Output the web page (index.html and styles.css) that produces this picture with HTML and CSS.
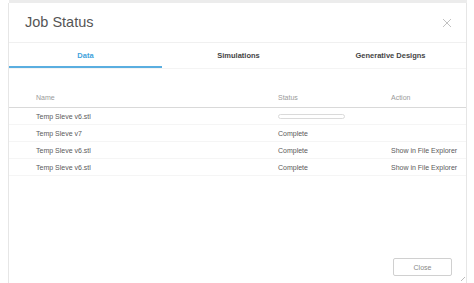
FILE: index.html
```html
<!DOCTYPE html>
<html lang="en">
  <head>
    <meta charset="UTF-8" />
    <title>Job Status</title>
    <link rel="stylesheet" href="styles.css">
  </head>
  <body>
    <div class="topband"></div>
    <main class="modal" role="dialog" aria-label="Job Status">
      <header class="modal-header">
        <h1>Job Status</h1>
        <button class="close-x" aria-label="Close">
          <svg width="10" height="10" viewBox="0 0 10 10">
            <path d="M1 1 L9 9 M9 1 L1 9" stroke="#c2c2c2" stroke-width="1" fill="none" />
          </svg>
        </button>
      </header>

      <nav class="tabs">
        <div class="tab active">Data</div>
        <div class="tab">Simulations</div>
        <div class="tab">Generative Designs</div>
      </nav>

      <section class="jobs">
        <div class="row head">
          <div>Name</div>
          <div>Status</div>
          <div>Action</div>
        </div>
        <div class="row">
          <div>Temp Sleve v6.stl</div>
          <div><div class="progress"></div></div>
          <div></div>
        </div>
        <div class="row">
          <div>Temp Sleve v7</div>
          <div>Complete</div>
          <div></div>
        </div>
        <div class="row">
          <div>Temp Sleve v6.stl</div>
          <div>Complete</div>
          <div>Show in File Explorer</div>
        </div>
        <div class="row">
          <div>Temp Sleve v6.stl</div>
          <div>Complete</div>
          <div>Show in File Explorer</div>
        </div>
      </section>

      <footer class="modal-footer">
        <button class="btn-close">Close</button>
      </footer>
      <div class="resize"></div>
    </main>
  </body>
</html>
```

FILE: styles.css
```css
* {
  margin: 0;
  padding: 0;
  box-sizing: border-box;
}

body {
  font-family: "Liberation Sans", Arial, sans-serif;
  background: #fff;
  color: #555;
  width: 474px;
  height: 283px;
  overflow: hidden;
}

.topband {
  height: 3px;
  margin: 0 7px 0 9px;
  background: #ececec;
}

.modal {
  position: relative;
  margin: 0 7px 0 8px;
  height: 280px;
  background: #fff;
  border-left: 1px solid #e6e6e6;
  border-right: 1px solid #e6e6e6;
  display: flex;
  flex-direction: column;
}

.modal-header {
  height: 40px;
  display: flex;
  align-items: center;
  justify-content: space-between;
  padding: 0 14px 0 16px;
  border-bottom: 1px solid #f0f0f0;
}

.modal-header h1 {
  font-weight: 400;
  font-size: 14.5px;
  color: #555;
  margin-top: -1px;
}

.close-x {
  background: none;
  border: none;
  display: flex;
  margin-top: 1px;
}

.tabs {
  display: grid;
  grid-template-columns: 153px 153px 1fr;
  height: 26px;
  border-bottom: 1px solid #f4f4f4;
}

.tab {
  text-align: center;
  font-size: 7.5px;
  font-weight: 700;
  color: #444;
  padding-top: 8px;
}

.tab.active {
  color: #3fa3dc;
  border-bottom: 2px solid #5aaee0;
}

.jobs {
  margin-top: 19px;
}

.row {
  display: grid;
  grid-template-columns: 242px 113px 1fr;
  padding-left: 27px;
  height: 17px;
  align-items: center;
  font-size: 7px;
  color: #5a5a5a;
  border-bottom: 1px solid #f5f5f5;
}

.row.head {
  height: 20px;
  color: #9a9a9a;
  border-bottom: 1px solid #d9d9d9;
}

.progress {
  width: 67px;
  height: 5px;
  border: 1px solid #dadada;
  border-radius: 3px;
}

.modal-footer {
  margin-top: auto;
  display: flex;
  justify-content: flex-end;
  padding: 0 14px 7px 0;
}

.btn-close {
  width: 59px;
  height: 18px;
  background: #fff;
  border: 1px solid #d0d0d0;
  border-radius: 2px;
  font-family: "Liberation Sans", Arial, sans-serif;
  font-size: 7px;
  color: #888;
}

.resize {
  position: absolute;
  right: 1px;
  bottom: 2px;
  width: 4px;
  height: 4px;
  background: linear-gradient(135deg, transparent 45%, #bbb 45%, #bbb 60%, transparent 60%);
}
```
